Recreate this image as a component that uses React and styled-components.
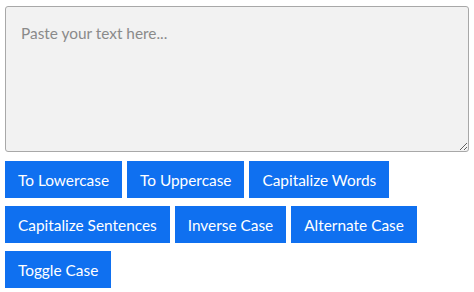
import styled, { createGlobalStyle } from 'styled-components';

const GlobalStyle = createGlobalStyle`
    body {
        margin: 0;
        background: #fff;
        font-family: Lato, "Noto Sans", sans-serif;
    }
`;

const actions = [
    'To Lowercase',
    'To Uppercase',
    'Capitalize Words',
    'Capitalize Sentences',
    'Inverse Case',
    'Alternate Case',
    'Toggle Case',
];

const App = () => {
    return (
        <Container>
            <GlobalStyle />
            <TextArea placeholder="Paste your text here..." />
            <ButtonRow>
                {actions.map((label) => (
                    <Button key={label}>{label}</Button>
                ))}
            </ButtonRow>
        </Container>
    );
};

const Container = styled.div`
    padding: 6px 6px 0 5px;
`;

const TextArea = styled.textarea`
    display: block;
    box-sizing: border-box;
    width: 464px;
    height: 146px;
    padding: 17px 15px;
    border: 1px solid #a8a8a8;
    border-radius: 3px;
    background: #f2f2f2;
    font-family: Lato, "Noto Sans", sans-serif;
    font-size: 15.4px;
    color: #333;
    resize: vertical;

    &::placeholder {
        color: #8a8a8a;
    }
`;

const ButtonRow = styled.div`
    display: flex;
    flex-wrap: wrap;
    column-gap: 5px;
    row-gap: 8px;
    margin-top: 9px;
`;

const Button = styled.button`
    height: 37px;
    padding: 0 13px;
    border: none;
    border-radius: 0;
    background: #0f70f0;
    color: #fff;
    font-family: Lato, "Noto Sans", sans-serif;
    font-size: 15.4px;
    cursor: pointer;
`;

export default App;
